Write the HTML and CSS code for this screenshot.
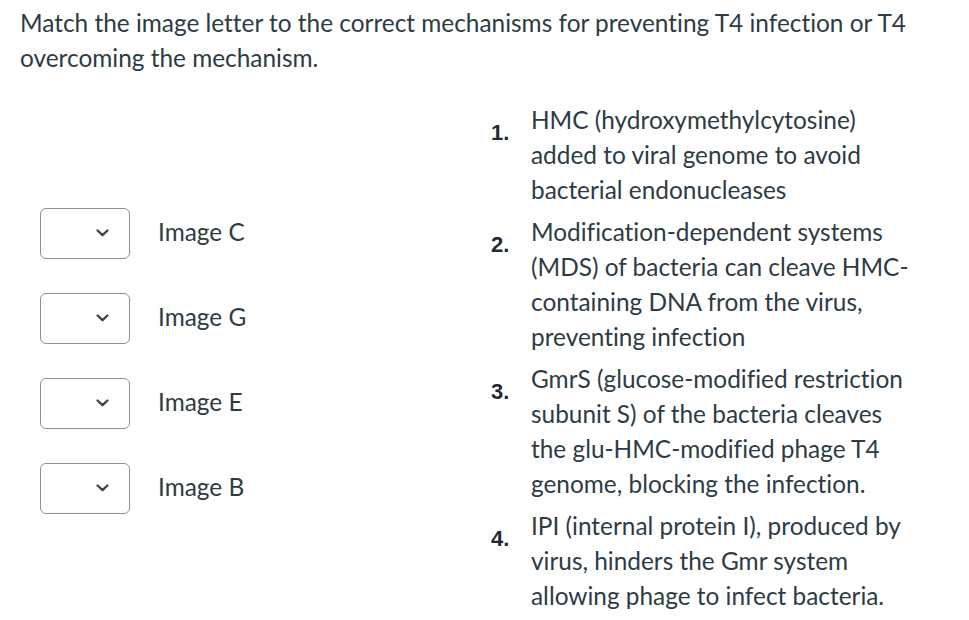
FILE: index.html
```html
<!DOCTYPE html>
<html lang="en">
<head>
<meta charset="utf-8">
<title>Matching question</title>
<link rel="stylesheet" href="styles.css">
</head>
<body>
<div class="question">
  <p class="prompt">Match the image letter to the correct mechanisms for preventing T4 infection or T4 overcoming the mechanism.</p>
  <div class="matching">
    <div class="choices">
      <div class="choice">
        <div class="select"><svg class="chev" width="13" height="8" viewBox="0 0 13 8"><path d="M1.6 1.5 L6.5 6.2 L11.4 1.5" fill="none" stroke="#454545" stroke-width="2.4" stroke-linecap="round" stroke-linejoin="round"/></svg></div>
        <span class="label">Image C</span>
      </div>
      <div class="choice">
        <div class="select"><svg class="chev" width="13" height="8" viewBox="0 0 13 8"><path d="M1.6 1.5 L6.5 6.2 L11.4 1.5" fill="none" stroke="#454545" stroke-width="2.4" stroke-linecap="round" stroke-linejoin="round"/></svg></div>
        <span class="label">Image G</span>
      </div>
      <div class="choice">
        <div class="select"><svg class="chev" width="13" height="8" viewBox="0 0 13 8"><path d="M1.6 1.5 L6.5 6.2 L11.4 1.5" fill="none" stroke="#454545" stroke-width="2.4" stroke-linecap="round" stroke-linejoin="round"/></svg></div>
        <span class="label">Image E</span>
      </div>
      <div class="choice">
        <div class="select"><svg class="chev" width="13" height="8" viewBox="0 0 13 8"><path d="M1.6 1.5 L6.5 6.2 L11.4 1.5" fill="none" stroke="#454545" stroke-width="2.4" stroke-linecap="round" stroke-linejoin="round"/></svg></div>
        <span class="label">Image B</span>
      </div>
    </div>
    <ol class="options">
      <li class="option"><span class="num">1.</span><span class="text">HMC (hydroxymethylcytosine) added to viral genome to avoid bacterial endonucleases</span></li>
      <li class="option"><span class="num">2.</span><span class="text">Modification-dependent systems (MDS) of bacteria can cleave HMC-containing DNA from the virus, preventing infection</span></li>
      <li class="option"><span class="num">3.</span><span class="text">GmrS (glucose-modified restriction subunit S) of the bacteria cleaves the glu-HMC-modified phage T4 genome, blocking the infection.</span></li>
      <li class="option"><span class="num">4.</span><span class="text">IPI (internal protein I), produced by virus, hinders the Gmr system allowing phage to infect bacteria.</span></li>
    </ol>
  </div>
</div>
</body>
</html>
```

FILE: styles.css
```css
html, body {
  margin: 0;
  padding: 0;
  background: #ffffff;
}

body {
  font-family: Lato, "Noto Sans", sans-serif;
  font-variant-ligatures: none;
  color: #2d3b45;
}

.question {
  padding: 5px 20px 0 20px;
}

.prompt {
  margin: 0;
  font-size: 24.4px;
  line-height: 35px;
}

.matching {
  display: flex;
  align-items: center;
  margin-top: 27px;
}

.choices {
  display: flex;
  flex-direction: column;
  gap: 34px;
  padding-top: 6px;
  padding-left: 20px;
  width: 452px;
  flex: none;
}

.choice {
  display: flex;
  align-items: center;
  gap: 28px;
}

.select {
  box-sizing: border-box;
  width: 90px;
  height: 51px;
  border: 1px solid #8d9296;
  border-radius: 6px;
  display: flex;
  align-items: center;
  justify-content: flex-end;
  padding-right: 20px;
}

.chev {
  display: block;
}

.label {
  font-size: 24.4px;
  line-height: 35px;
  position: relative;
  top: -2px;
}

.options {
  list-style: none;
  margin: 0;
  padding: 0;
  display: flex;
  flex-direction: column;
  gap: 7px;
}

.option {
  display: flex;
}

.num {
  flex: none;
  width: 40px;
  margin-left: -1px;
  font-family: "Liberation Sans", Arial, sans-serif;
  font-weight: bold;
  font-size: 22px;
  line-height: 22px;
  padding-top: 20px;
  color: #1f2a33;
}

.text {
  width: 385px;
  font-size: 24.4px;
  line-height: 35px;
}
```
